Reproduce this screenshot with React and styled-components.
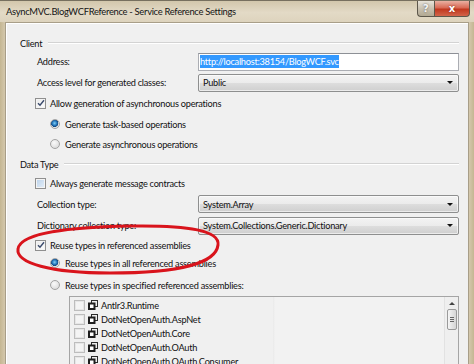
import styled, { createGlobalStyle } from "styled-components";

const GlobalStyle = createGlobalStyle`
  html, body { margin: 0; padding: 0; background: #f0f0f0; }
  body {
    font-family: Lato, "Noto Sans", sans-serif;
    font-size: 9.2px;
    letter-spacing: -0.25px;
    color: #111;
  }
`;

const Window = styled.div`
  position: relative;
  width: 474px;
  height: 364px;
  overflow: hidden;
  display: flex;
  flex-direction: column;
  box-sizing: border-box;
  border-top: 1px solid #77705f;
  background: #d4c9af;
`;

const TitleBar = styled.div`
  height: 21px;
  flex-shrink: 0;
  display: flex;
  justify-content: space-between;
  align-items: flex-start;
  padding-left: 6px;
  background: linear-gradient(#d2c7ac, #e3dac6 55%, #ddd3bd);
`;

const Title = styled.div`
  line-height: 22px;
  font-size: 9.4px;
  letter-spacing: -0.3px;
  color: #141414;
`;

const Caption = styled.div`
  display: flex;
  margin-right: 4px;
`;

const CapButton = styled.div`
  height: 16px;
  box-sizing: border-box;
  display: flex;
  align-items: center;
  justify-content: center;
  border: 1px solid #5d574b;
  border-top: none;
  color: #fff;
  font-family: "DejaVu Sans", sans-serif;
  font-weight: bold;
  letter-spacing: 0;
`;

const HelpButton = styled(CapButton)`
  width: 17px;
  border-right: none;
  border-bottom-left-radius: 4px;
  background: linear-gradient(#e8e4da, #c9c1b0 50%, #b2a993);
  color: #f4f4f4;
  font-size: 10px;
  text-shadow: 0 0 2px #555;
`;

const CloseButton = styled(CapButton)`
  width: 36px;
  border-bottom-right-radius: 4px;
  background: linear-gradient(#eab0a2, #d86a55 45%, #c1381f 55%, #d2644a);
  font-size: 10px;
  text-shadow: 0 0 2px #7a1a0a;
`;

const Frame = styled.div`
  flex: 1;
  display: flex;
  padding: 0 5px 0 5px;
  background: linear-gradient(90deg, #c4b692, #d6cab0 1.2%, #d6cab0 98.8%, #c4b692);
`;

const Panel = styled.div`
  flex: 1;
  box-sizing: border-box;
  background: #f0f0f0;
  border: 1px solid #a89e88;
  border-bottom: none;
  box-shadow: inset 1px 1px 0 #fff;
  padding: 12px 9px 0 14px;
`;

const GroupHeader = styled.div`
  display: flex;
  align-items: center;
  gap: 6px;
  height: ${(p) => p.$h || 16}px;

  &::after {
    content: "";
    flex: 1;
    border-top: 1px solid #d3d3d3;
    border-bottom: 1px solid #fff;
  }
`;

const FieldRow = styled.div`
  display: grid;
  grid-template-columns: 161px 1fr;
  align-items: center;
  height: ${(p) => p.$h || 21}px;
  padding-left: 17px;
`;

const TextBox = styled.div`
  height: 18px;
  box-sizing: border-box;
  display: flex;
  align-items: center;
  padding-left: 1px;
  background: #fff;
  border: 1px solid #abadb3;
  border-top-color: #8d9096;
`;

const Selected = styled.span`
  background: #3399ff;
  color: #fff;
  padding: 1px 0;
`;

const Combo = styled.div`
  height: 18px;
  box-sizing: border-box;
  display: flex;
  align-items: center;
  justify-content: space-between;
  padding: 0 5px 0 4px;
  border: 1px solid #8e8f8f;
  border-radius: 2px;
  background: linear-gradient(#f3f3f3, #ebebeb 50%, #dddddd 51%, #cfcfcf);
  box-shadow: inset 0 0 0 1px rgba(255, 255, 255, 0.6);

  &::after {
    content: "";
    border-left: 3px solid transparent;
    border-right: 3px solid transparent;
    border-top: 3px solid #111;
  }
`;

const OptionRow = styled.div`
  display: flex;
  align-items: center;
  gap: ${(p) => p.$gap || 4}px;
  height: ${(p) => p.$h || 20}px;
  margin-top: ${(p) => p.$mt || 0}px;
  padding-left: ${(p) => p.$indent || 0}px;
`;

const CheckBox = styled.span`
  width: 11px;
  height: 11px;
  box-sizing: border-box;
  flex-shrink: 0;
  display: inline-flex;
  align-items: center;
  justify-content: center;
  border: 1px solid ${(p) => (p.$disabled ? "#bdbdbd" : "#8f8f8f")};
  background: ${(p) =>
    p.$disabled
      ? "#f4f4f4"
      : p.$checked
      ? "linear-gradient(135deg, #e9e9e9, #fdfdfd)"
      : "linear-gradient(135deg, #b9d1ea, #e6eff8)"};
  box-shadow: inset 0 0 0 1px ${(p) => (p.$disabled ? "#e6e6e6" : "#f4f4f4")};
`;

const Radio = styled.span`
  width: 10px;
  height: 10px;
  box-sizing: border-box;
  flex-shrink: 0;
  border-radius: 50%;
  border: 1px solid #a3a3a3;
  background: ${(p) =>
    p.$checked
      ? "radial-gradient(circle at 45% 40%, #7fd0f7 0, #1f6fb5 2.5px, #15497e 3.5px, #e8e8e8 4px)"
      : "radial-gradient(circle at 40% 35%, #fafafa, #d4d4d4)"};
`;

const ListBox = styled.div`
  position: relative;
  margin: 1px 0 0 49px;
  height: 80px;
  box-sizing: border-box;
  border: 1px solid #a5a5a5;
  border-bottom: none;
  padding: 1px 0 0 4px;
  background: linear-gradient(90deg, #f0f0f0 203px, #e9e9e9 203px, #f2f2f2 205px);
`;

const ListItem = styled.div`
  display: flex;
  align-items: center;
  gap: 3px;
  height: 14px;
`;

const ScrollBar = styled.div`
  position: absolute;
  top: 0;
  right: 0;
  width: 13px;
  bottom: 0;
  background: #efefef;
  border-left: 1px solid #e2e2e2;
  display: flex;
  flex-direction: column;
  align-items: center;
  padding-top: 5px;
  gap: 4px;
`;

const ScrollArrow = styled.span`
  border-left: 3px solid transparent;
  border-right: 3px solid transparent;
  border-bottom: 3px solid #444;
`;

const ScrollThumb = styled.div`
  width: 10px;
  height: 21px;
  box-sizing: border-box;
  border: 1px solid #9a9a9a;
  border-radius: 2px;
  background: linear-gradient(90deg, #f6f6f6, #e4e4e4 50%, #d6d6d6);
  display: flex;
  flex-direction: column;
  align-items: center;
  justify-content: center;
  gap: 1px;

  span {
    width: 4px;
    height: 1px;
    background: #666;
  }
`;

const Overlay = styled.svg`
  position: absolute;
  left: 0;
  top: 0;
  pointer-events: none;
`;

const CheckMark = () => (
  <svg width="8" height="8" viewBox="0 0 8 8">
    <path d="M1 4.2 L3 6.3 L7 1.2" fill="none" stroke="#3a4a6c" strokeWidth="1.4" />
  </svg>
);

const RefIcon = () => (
  <svg width="10" height="10" viewBox="0 0 10 10">
    <rect x="3.5" y="0.5" width="6" height="6" fill="#eee" stroke="#2b2b2b" />
    <rect x="1" y="3.5" width="5.5" height="5.5" fill="#fff" stroke="#1e1e1e" strokeWidth="2" />
  </svg>
);

const assemblies = [
  "Antlr3.Runtime",
  "DotNetOpenAuth.AspNet",
  "DotNetOpenAuth.Core",
  "DotNetOpenAuth.OAuth",
  "DotNetOpenAuth.OAuth.Consumer",
];

export default function App() {
  return (
    <>
      <GlobalStyle />
      <Window>
        <TitleBar>
          <Title>AsyncMVC.BlogWCFReference - Service Reference Settings</Title>
          <Caption>
            <HelpButton>?</HelpButton>
            <CloseButton>x</CloseButton>
          </Caption>
        </TitleBar>
        <Frame>
          <Panel>
            <GroupHeader>Client</GroupHeader>
            <FieldRow>
              <span>Address:</span>
              <TextBox>
                <Selected>http://localhost:38154/BlogWCF.svc</Selected>
              </TextBox>
            </FieldRow>
            <FieldRow>
              <span>Access level for generated classes:</span>
              <Combo>Public</Combo>
            </FieldRow>
            <OptionRow $indent={15}>
              <CheckBox $checked>
                <CheckMark />
              </CheckBox>
              Allow generation of asynchronous operations
            </OptionRow>
            <OptionRow $indent={30} $mt={1} $gap={5}>
              <Radio $checked />
              Generate task-based operations
            </OptionRow>
            <OptionRow $indent={30} $gap={5}>
              <Radio />
              Generate asynchronous operations
            </OptionRow>

            <GroupHeader $h={20}>Data Type</GroupHeader>
            <OptionRow $indent={15} $h={19}>
              <CheckBox />
              Always generate message contracts
            </OptionRow>
            <FieldRow $h={22}>
              <span>Collection type:</span>
              <Combo>System.Array</Combo>
            </FieldRow>
            <FieldRow>
              <span>Dictionary collection type:</span>
              <Combo>System.Collections.Generic.Dictionary</Combo>
            </FieldRow>
            <OptionRow $indent={15} $h={18}>
              <CheckBox $checked>
                <CheckMark />
              </CheckBox>
              Reuse types in referenced assemblies
            </OptionRow>
            <OptionRow $indent={30} $h={18} $gap={5}>
              <Radio $checked />
              Reuse types in all referenced assemblies
            </OptionRow>
            <OptionRow $indent={30} $mt={3} $gap={5}>
              <Radio />
              Reuse types in specified referenced assemblies:
            </OptionRow>
            <ListBox>
              {assemblies.map((name) => (
                <ListItem key={name}>
                  <CheckBox $disabled />
                  <RefIcon />
                  {name}
                </ListItem>
              ))}
              <ScrollBar>
                <ScrollArrow />
                <ScrollThumb>
                  <span />
                  <span />
                  <span />
                </ScrollThumb>
              </ScrollBar>
            </ListBox>
          </Panel>
        </Frame>
        <Overlay width="474" height="364" viewBox="0 0 474 364">
          <path
            d="M130 225 C190 224 220 230 218 244 C216 262 180 272 110 272 C50 272 16 262 18 248 C20 232 70 226 130 225 Z"
            fill="none"
            stroke="#d9141c"
            strokeWidth="3"
          />
        </Overlay>
      </Window>
    </>
  );
}
